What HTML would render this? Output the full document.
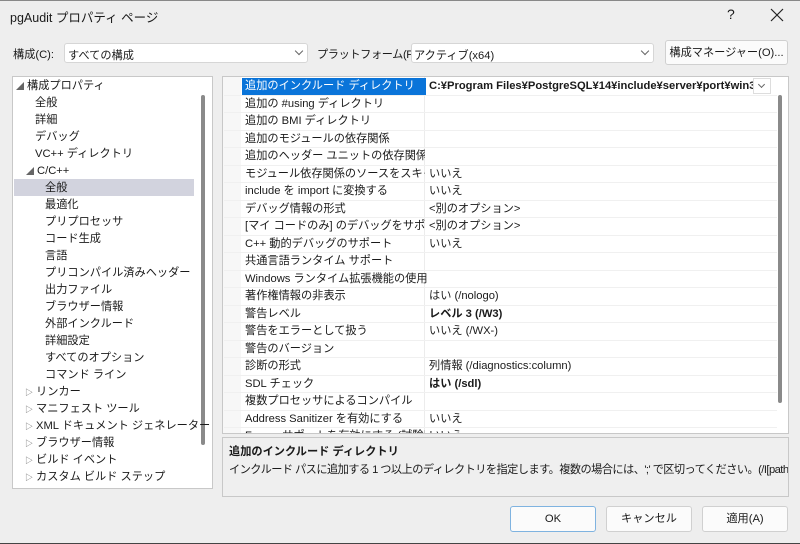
<!DOCTYPE html>
<html><head><meta charset="utf-8"><style>
*{margin:0;padding:0;box-sizing:border-box}
body{width:800px;height:544px;background:#eeeeee;font-family:"Liberation Sans","Noto Sans CJK JP",sans-serif;font-size:11.2px;color:#1a1a1a;position:relative;overflow:hidden}
.abs{position:absolute;white-space:nowrap}
.title{left:10px;top:7px;font-size:12.5px}
.box{border:1px solid #d6d6d6;background:#fff;border-radius:3px}
.chev{position:absolute;width:6px;height:6px;border-right:1px solid #666;border-bottom:1px solid #666;transform:rotate(45deg)}
.btn{position:absolute;border:1px solid #d0d0d0;background:#fbfbfb;border-radius:3px;text-align:center;line-height:24px;white-space:nowrap}
.tree div{position:absolute;height:17px;line-height:17px;white-space:nowrap}
.row{position:absolute;left:1px;width:553px;height:17.5px;border-bottom:1px solid #f0f0f0;white-space:nowrap;line-height:17px}
.row .n{position:absolute;left:18px;width:183px;overflow:hidden;padding-left:3px}
.row .v{position:absolute;left:203px;padding-left:2px}
.tri{font-size:8px;color:#666;margin-right:3px}
</style></head><body>
<div class="abs" style="left:0;top:0;width:800px;height:1px;background:#888"></div>
<div class="abs" style="left:0;top:543px;width:800px;height:1px;background:#444"></div>
<div class="abs title">pgAudit プロパティ ページ</div>
<div class="abs" style="left:727px;top:6px;font-size:14px">?</div>
<svg class="abs" style="left:770px;top:8px" width="14" height="14"><path d="M1 1L13 13M13 1L1 13" stroke="#222" stroke-width="1.2"/></svg>

<div class="abs" style="left:13px;top:46px">構成(C):</div>
<div class="abs box" style="left:64px;top:43px;width:244px;height:20px"><span class="abs" style="left:3px;top:3px">すべての構成</span><div class="chev" style="left:231px;top:4px"></div></div>
<div class="abs" style="left:317px;top:46px;letter-spacing:-0.4px">プラットフォーム(P):</div>
<div class="abs box" style="left:411px;top:43px;width:243px;height:20px"><span class="abs" style="left:2px;top:3px">アクティブ(x64)</span><div class="chev" style="left:230px;top:4px"></div></div>
<div class="btn" style="left:665px;top:40px;width:123px;height:25px">構成マネージャー(O)...</div>

<div class="abs" style="left:12px;top:76px;width:201px;height:413px;border:1px solid #c8c8c8;background:#fff"></div>
<div class="abs" style="left:14px;top:179px;width:180px;height:17px;background:#d2d3de"></div>
<div class="abs" style="left:201px;top:95px;width:4px;height:350px;background:#8a8a8a;border-radius:2px"></div>
<div class="tree abs" style="left:0;top:0">
<div style="left:16px;top:78px"><span class="tri">◢</span>構成プロパティ</div>
<div style="left:35px;top:95px">全般</div>
<div style="left:35px;top:112px">詳細</div>
<div style="left:35px;top:129px">デバッグ</div>
<div style="left:35px;top:146px">VC++ ディレクトリ</div>
<div style="left:26px;top:163px"><span class="tri">◢</span>C/C++</div>
<div style="left:45px;top:180px">全般</div>
<div style="left:45px;top:197px">最適化</div>
<div style="left:45px;top:214px">プリプロセッサ</div>
<div style="left:45px;top:231px">コード生成</div>
<div style="left:45px;top:248px">言語</div>
<div style="left:45px;top:265px">プリコンパイル済みヘッダー</div>
<div style="left:45px;top:282px">出力ファイル</div>
<div style="left:45px;top:299px">ブラウザー情報</div>
<div style="left:45px;top:316px">外部インクルード</div>
<div style="left:45px;top:333px">詳細設定</div>
<div style="left:45px;top:350px">すべてのオプション</div>
<div style="left:45px;top:367px">コマンド ライン</div>
<div style="left:25px;top:384px"><span class="tri">▷</span>リンカー</div>
<div style="left:25px;top:401px"><span class="tri">▷</span>マニフェスト ツール</div>
<div style="left:25px;top:418px"><span class="tri">▷</span>XML ドキュメント ジェネレーター</div>
<div style="left:25px;top:435px"><span class="tri">▷</span>ブラウザー情報</div>
<div style="left:25px;top:452px"><span class="tri">▷</span>ビルド イベント</div>
<div style="left:25px;top:469px"><span class="tri">▷</span>カスタム ビルド ステップ</div>
<div style="left:25px;top:486px;height:2px;overflow:hidden"><span class="tri">▷</span>Code Analysis</div>
</div>

<div class="abs" style="left:222px;top:76px;width:567px;height:358px;border:1px solid #c8c8c8;background:#fff;overflow:hidden">
<div class="abs" style="left:0;top:0;width:18px;height:358px;background:#f7f7f7"></div>
<div class="abs" style="left:201px;top:0;width:1px;height:358px;background:#ececec"></div>
<div class="abs" style="left:555px;top:18px;width:4px;height:308px;background:#8a8a8a;border-radius:2px"></div>
<div class="row" style="top:1px"><span class="n" style="background:#0a74d9;color:#fff;width:184px">追加のインクルード ディレクトリ</span><span class="v" style="font-weight:bold;width:344px;overflow:hidden">C:¥Program Files¥PostgreSQL¥14¥include¥server¥port¥win32</span><span class="abs" style="left:529px;top:0;width:18px;height:16px;border:1px solid #ddd;background:#fff"><span class="chev" style="left:5px;top:3px;width:5px;height:5px"></span></span></div>
<div class="row" style="top:18.5px"><span class="n">追加の #using ディレクトリ</span></div>
<div class="row" style="top:36px"><span class="n">追加の BMI ディレクトリ</span></div>
<div class="row" style="top:53.5px"><span class="n">追加のモジュールの依存関係</span></div>
<div class="row" style="top:71px"><span class="n">追加のヘッダー ユニットの依存関係</span></div>
<div class="row" style="top:88.5px"><span class="n">モジュール依存関係のソースをスキャンする</span><span class="v">いいえ</span></div>
<div class="row" style="top:106px"><span class="n">include を import に変換する</span><span class="v">いいえ</span></div>
<div class="row" style="top:123.5px"><span class="n">デバッグ情報の形式</span><span class="v">&lt;別のオプション&gt;</span></div>
<div class="row" style="top:141px"><span class="n">[マイ コードのみ] のデバッグをサポートする</span><span class="v">&lt;別のオプション&gt;</span></div>
<div class="row" style="top:158.5px"><span class="n">C++ 動的デバッグのサポート</span><span class="v">いいえ</span></div>
<div class="row" style="top:176px"><span class="n">共通言語ランタイム サポート</span></div>
<div class="row" style="top:193.5px"><span class="n" style="width:auto">Windows ランタイム拡張機能の使用</span></div>
<div class="row" style="top:211px"><span class="n">著作権情報の非表示</span><span class="v">はい (/nologo)</span></div>
<div class="row" style="top:228.5px"><span class="n">警告レベル</span><span class="v" style="font-weight:bold">レベル 3 (/W3)</span></div>
<div class="row" style="top:246px"><span class="n">警告をエラーとして扱う</span><span class="v">いいえ (/WX-)</span></div>
<div class="row" style="top:263.5px"><span class="n">警告のバージョン</span></div>
<div class="row" style="top:281px"><span class="n">診断の形式</span><span class="v">列情報 (/diagnostics:column)</span></div>
<div class="row" style="top:298.5px"><span class="n">SDL チェック</span><span class="v" style="font-weight:bold">はい (/sdl)</span></div>
<div class="row" style="top:316px"><span class="n">複数プロセッサによるコンパイル</span></div>
<div class="row" style="top:333.5px"><span class="n">Address Sanitizer を有効にする</span><span class="v">いいえ</span></div>
<div class="row" style="top:351px"><span class="n">Fuzzer サポートを有効にする (試験段階)</span><span class="v">いいえ</span></div>
</div>

<div class="abs" style="left:222px;top:437px;width:567px;height:60px;border:1px solid #c8c8c8;background:#efefef;overflow:hidden">
<div class="abs" style="left:6px;top:5px;font-weight:bold">追加のインクルード ディレクトリ</div>
<div class="abs" style="left:6px;top:23px;letter-spacing:-0.55px">インクルード パスに追加する 1 つ以上のディレクトリを指定します。複数の場合には、';' で区切ってください。(/I[path])</div>
</div>

<div class="btn" style="left:510px;top:506px;width:86px;height:26px;border-color:#7fb3e0">OK</div>
<div class="btn" style="left:606px;top:506px;width:86px;height:26px">キャンセル</div>
<div class="btn" style="left:702px;top:506px;width:86px;height:26px">適用(A)</div>
</body></html>
